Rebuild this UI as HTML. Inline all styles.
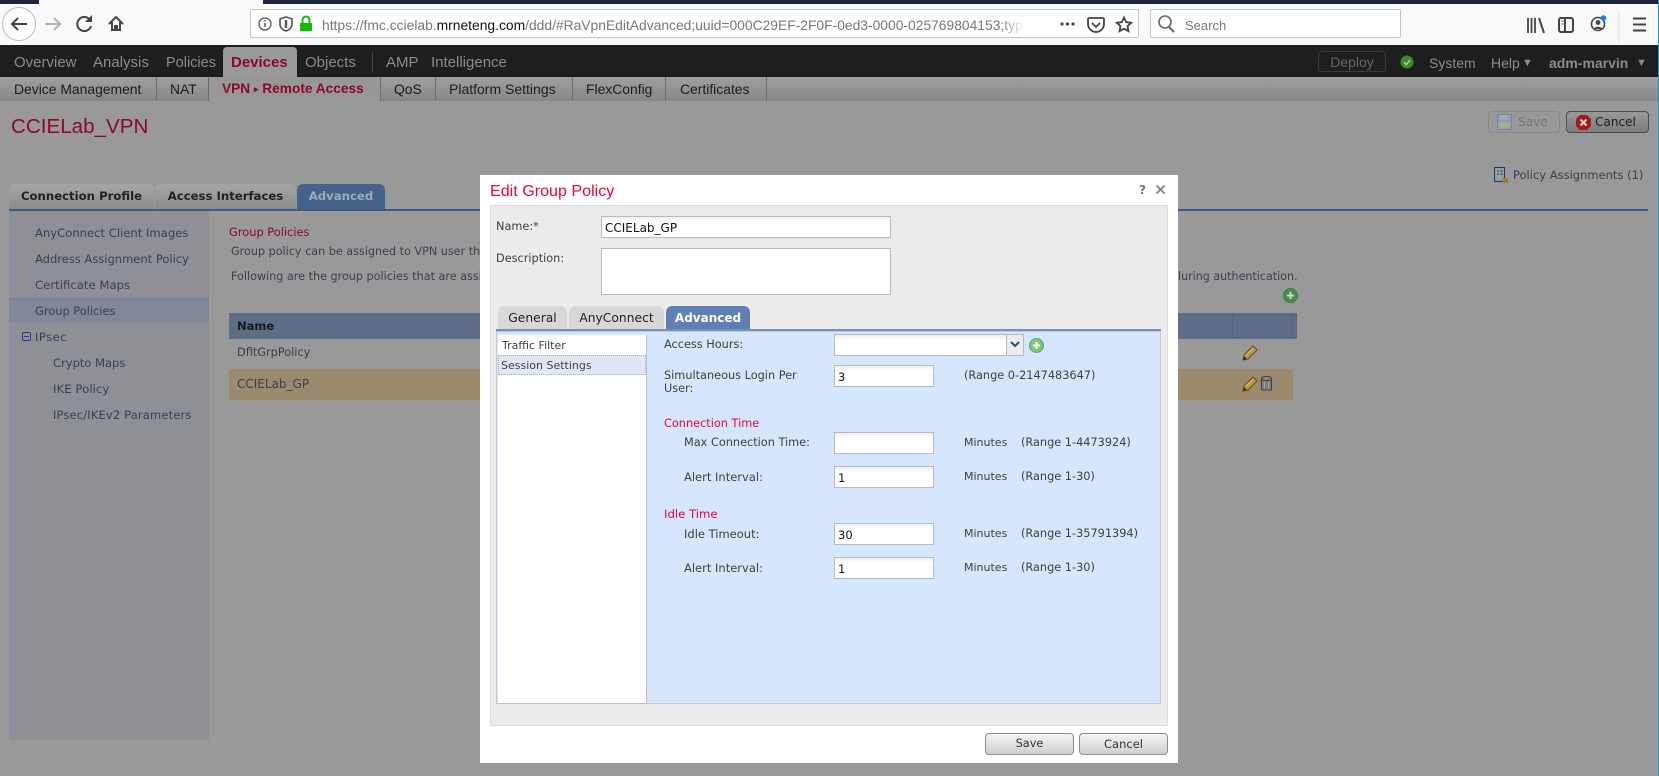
<!DOCTYPE html>
<html><head><meta charset="utf-8"><title>Edit Group Policy</title>
<style>
html,body{margin:0;padding:0}
body{width:1659px;height:776px;overflow:hidden;background:#999;position:relative;font-family:"DejaVu Sans","Liberation Sans",sans-serif;font-size:11.300px;color:#333}
.a{position:absolute}
.t{position:absolute;white-space:nowrap;line-height:16px;height:16px;margin-top:1px}
.n{font-family:"Liberation Sans",sans-serif;font-size:15px;color:#8b8b8b}
.s{font-family:"Liberation Sans",sans-serif;font-size:13.900px;color:#1c1c1c;margin-top:0}
.v{width:1px;background:#6f6f6f;top:77px;height:24px}
.l{color:#3f3f3f}
.d{color:#3a4050;font-size:11.500px}
.m{margin-top:0}
.r{color:#e0083c}
.i{position:absolute;box-sizing:border-box;background:linear-gradient(#f0f0f0,#fff 5px);border:1px solid #b3b8cc;color:#111;padding-left:3px;line-height:23px;height:22px;width:100px;left:834px;font-size:11.500px}
.tab{position:absolute;box-sizing:border-box;border-radius:6px 6px 0 0;text-align:center;font-weight:bold}
.b{position:absolute;box-sizing:border-box;border:1px solid #8d8d8d;border-radius:4px;background:linear-gradient(#f5f5f5,#cfcfcf);text-align:center;line-height:20px;color:#333}
</style></head><body>

<!-- browser chrome -->
<div class="a" style="left:0;top:0;width:1659px;height:45px;background:#f9f9fa"></div>
<div class="a" style="left:0;top:0;width:39px;height:4px;background:#1c2340"></div>
<div class="a" style="left:263px;top:0;width:1396px;height:4px;background:#1c2340"></div>
<svg class="a" style="left:0;top:0" width="240" height="45" fill="none">
<circle cx="19" cy="24" r="16.500" fill="#fff" stroke="#bbb"/>
<path d="M27 24H12M18 18l-6 6 6 6" stroke="#444" stroke-width="2"/>
<path d="M45 24H59M54 18l6 6-6 6" stroke="#b0b0b0" stroke-width="2"/>
<path d="M90 20a7 7 0 1 0 1 6" stroke="#444" stroke-width="2"/><path d="M92 15v7h-7z" fill="#444"/>
<path d="M109 24l7-7 7 7M112 22v8h8v-8M115 30v-4h2v4" stroke="#444" stroke-width="2"/>
</svg>
<div class="a" style="left:250px;top:9px;width:889px;height:29px;box-sizing:border-box;background:#fff;border:1px solid #c4c4c4;border-radius:2px"></div>
<svg class="a" style="left:255px;top:12px" width="60" height="24" fill="none">
<circle cx="10" cy="12" r="6" stroke="#555" stroke-width="1.300"/><path d="M10 11v4M10 8v1.500" stroke="#555" stroke-width="1.500"/>
<path d="M25 7l6-2 6 2v5c0 4-3 6-6 7-3-1-6-3-6-7z" stroke="#555" stroke-width="1.600"/><path d="M31 8v8" stroke="#555" stroke-width="2.400"/>
<rect x="45" y="11" width="12" height="8" fill="#12bc00"/><path d="M47.500 11V8a3.500 3.500 0 0 1 7 0v3" stroke="#12bc00" stroke-width="2"/>
</svg>
<div class="t" style="left:322px;top:16px;width:702px;overflow:hidden;font-family:'Liberation Sans',sans-serif;font-size:13.850px;color:#777">https://fmc.ccielab.<span style="color:#111">mrneteng.com</span>/ddd/#RaVpnEditAdvanced;uuid=000C29EF-2F0F-0ed3-0000-025769804153;typ</div>
<div class="a" style="left:1000px;top:12px;width:24px;height:24px;background:linear-gradient(90deg,rgba(255,255,255,0),#fff)"></div>
<svg class="a" style="left:1055px;top:12px" width="84" height="24" fill="none">
<circle cx="7" cy="12" r="1.600" fill="#444"/><circle cx="12.500" cy="12" r="1.600" fill="#444"/><circle cx="18" cy="12" r="1.600" fill="#444"/>
<path d="M34 6h14a1 1 0 0 1 1 1v5a8 8 0 0 1-16 0V7a1 1 0 0 1 1-1z" stroke="#444" stroke-width="1.800"/><path d="M37 11l4 4 4-4" stroke="#444" stroke-width="1.800"/>
<path d="M69 5.500l2.200 4.700 5 .6-3.700 3.400 1 5-4.500-2.500-4.500 2.500 1-5-3.700-3.400 5-.6z" stroke="#444" stroke-width="1.800"/>
</svg>
<div class="a" style="left:1150px;top:9px;width:251px;height:29px;box-sizing:border-box;background:#fff;border:1px solid #c4c4c4;border-radius:2px"></div>
<svg class="a" style="left:1156px;top:14px" width="22" height="20" fill="none"><circle cx="9" cy="8" r="6" stroke="#666" stroke-width="1.600"/><path d="M13 13l5 5" stroke="#666" stroke-width="2"/></svg>
<div class="t" style="left:1185px;top:17px;font-family:'Liberation Sans',sans-serif;font-size:13px;color:#777">Search</div>
<svg class="a" style="left:1520px;top:8px" width="139" height="36" fill="none">
<path d="M8 10v15M11.500 10v15M15 10v15" stroke="#444" stroke-width="1.800"/><path d="M19 10l5 15" stroke="#444" stroke-width="2"/>
<rect x="39" y="10" width="14" height="14" rx="2" stroke="#444" stroke-width="2"/><path d="M45 10v14" stroke="#444" stroke-width="2"/><path d="M41.500 13h2M41.500 16h2" stroke="#444"/>
<circle cx="78" cy="16" r="6.500" stroke="#444" stroke-width="1.600"/><circle cx="78" cy="14.500" r="2.400" fill="#444"/><path d="M73.500 21a5 4 0 0 1 9 0" fill="#444"/><circle cx="83.500" cy="10" r="2.800" fill="#0a84ff"/>
<path d="M99 3v32" stroke="#ddd"/>
<path d="M113 10.500h13M113 16.500h13M113 22.500h13" stroke="#444" stroke-width="2"/>
</svg>

<!-- top nav -->
<div class="a" style="left:0;top:45px;width:1659px;height:32px;background:#1e1e1e"></div>
<div class="a" style="left:223px;top:47px;width:74px;height:30px;background:#999;border-radius:4px 4px 0 0"></div>
<div class="t n" style="left:14px;top:54px">Overview</div>
<div class="t n" style="left:93px;top:54px">Analysis</div>
<div class="t n" style="left:166px;top:54px;font-size:14.500px">Policies</div>
<div class="t n" style="left:231px;top:54px;color:#8a0a2c;font-weight:bold">Devices</div>
<div class="t n" style="left:305px;top:54px">Objects</div>
<div class="a" style="left:372px;top:52px;width:1px;height:20px;background:#444"></div>
<div class="t n" style="left:386px;top:54px">AMP</div>
<div class="t n" style="left:431px;top:54px">Intelligence</div>
<div class="a" style="left:1318px;top:51px;width:68px;height:21px;box-sizing:border-box;border:1px solid #3a3a3a;border-radius:4px;color:#666;text-align:center;font-family:'Liberation Sans',sans-serif;font-size:14px;line-height:21px">Deploy</div>
<svg class="a" style="left:1400px;top:55px" width="14" height="14"><circle cx="7" cy="7" r="6.500" fill="#3c8a23"/><path d="M4 7l2.300 2.500L10 5" fill="none" stroke="#a9c9a0" stroke-width="1.600"/></svg>
<div class="t n" style="left:1429px;top:54px;font-size:14px">System</div>
<div class="t n" style="left:1491px;top:54px;font-size:14px">Help</div>
<div class="t n" style="left:1522px;top:54px;font-size:11px">▼</div>
<div class="t n" style="left:1549px;top:54px;font-size:14px;font-weight:bold">adm-marvin</div>
<div class="t n" style="left:1636px;top:54px;font-size:11px">▼</div>

<!-- sub nav -->
<div class="a" style="left:0;top:77px;width:1659px;height:24px;background:linear-gradient(#a0a0a0,#868686)"></div>
<div class="a" style="left:208px;top:77px;width:172px;height:24px;background:linear-gradient(#979797,#999)"></div>
<div class="a v" style="left:156px"></div><div class="a v" style="left:208px"></div><div class="a v" style="left:380px"></div><div class="a v" style="left:435px"></div><div class="a v" style="left:572px"></div><div class="a v" style="left:665px"></div><div class="a v" style="left:766px"></div>
<div class="t s" style="left:14px;top:81px">Device Management</div>
<div class="t s" style="left:170px;top:81px">NAT</div>
<div class="t s" style="left:222px;top:81px;color:#8a0a2c;font-weight:bold;font-size:13.700px">VPN <span style="font-size:9px;vertical-align:1px">▸</span> Remote Access</div>
<div class="t s" style="left:394px;top:81px">QoS</div>
<div class="t s" style="left:449px;top:81px;font-size:14px">Platform Settings</div>
<div class="t s" style="left:586px;top:81px">FlexConfig</div>
<div class="t s" style="left:680px;top:81px">Certificates</div>

<!-- page -->
<div class="t" style="left:11px;top:116px;margin-top:0;height:22px;line-height:22px;font-family:'Liberation Sans',sans-serif;font-size:20.600px;color:#8a0a2c">CCIELab_VPN</div>
<div class="b" style="left:1488px;top:111px;width:72px;height:22px;background:#999;border-color:#8a8a8a;color:#777;font-size:12px;padding-left:18px">Save</div>
<svg class="a" style="left:1497px;top:114px" width="16" height="16"><rect x=".5" y=".5" width="14" height="15" fill="#8ea0b8" stroke="#7085a5"/><rect x="3" y="1" width="8" height="5" fill="#a9a9a9"/><rect x="2.500" y="9" width="10" height="5" fill="#a6b08f"/></svg>
<div class="b" style="left:1566px;top:111px;width:83px;height:22px;background:linear-gradient(#999,#7d7d7d);border-color:#4c4c4c;color:#1e1e1e;font-size:12px;padding-left:16px">Cancel</div>
<svg class="a" style="left:1576px;top:115px" width="15" height="15"><path d="M4 0h7l4 4v7l-4 4H4L0 11V4z" fill="#a31a1a"/><path d="M4.500 4.500l6 6M10.500 4.500l-6 6" stroke="#ddd" stroke-width="2"/></svg>
<svg class="a" style="left:1494px;top:167px" width="15" height="17"><rect x=".5" y=".5" width="10" height="14" fill="#8fa0a8" stroke="#26365a"/><path d="M3 4h2M6 4h3M3 7h2M6 7h3" stroke="#1b5a3a"/><rect x="9" y="11" width="5" height="5" fill="#a87a2a"/></svg>
<div class="t d m" style="left:1513px;top:167px">Policy Assignments (1)</div>

<div class="tab" style="left:9px;top:184px;width:145px;height:25px;background:linear-gradient(#a6a6a6,#8b8b8b);color:#222;line-height:25px;font-size:11.700px">Connection Profile</div>
<div class="tab" style="left:155px;top:184px;width:141px;height:25px;background:linear-gradient(#a6a6a6,#8b8b8b);color:#222;line-height:25px;font-size:11.700px">Access Interfaces</div>
<div class="tab" style="left:297px;top:184px;width:88px;height:25px;background:#44628a;color:#a3a9b3;line-height:25px;font-size:11.700px">Advanced</div>
<div class="a" style="left:9px;top:209px;width:1639px;height:2px;background:#3f5a80"></div>

<div class="a" style="left:9px;top:211px;width:200px;height:529px;background:#8f9095"></div>
<div class="a" style="left:9px;top:297px;width:200px;height:26px;background:#82889a"></div>
<div class="t d m" style="left:35px;top:225px;font-size:11.600px">AnyConnect Client Images</div>
<div class="t d m" style="left:35px;top:251px">Address Assignment Policy</div>
<div class="t d m" style="left:35px;top:277px;font-size:11.700px">Certificate Maps</div>
<div class="t d m" style="left:35px;top:303px;font-size:11.400px">Group Policies</div>
<div class="a" style="left:22px;top:332px;width:9px;height:9px;box-sizing:border-box;border:1px solid #1f3a8a;border-radius:2px"></div><div class="a" style="left:24px;top:336px;width:5px;height:1px;background:#1f3a8a"></div>
<div class="t d m" style="left:35px;top:329px;letter-spacing:.5px">IPsec</div>
<div class="t d m" style="left:53px;top:355px">Crypto Maps</div>
<div class="t d m" style="left:53px;top:381px;font-size:11.800px">IKE Policy</div>
<div class="t d m" style="left:53px;top:407px;letter-spacing:.15px">IPsec/IKEv2 Parameters</div>

<div class="t m" style="left:229px;top:224px;color:#8a0a2c;font-size:11.400px">Group Policies</div>
<div class="t d" style="left:231px;top:243px;font-size:11.200px">Group policy can be assigned to VPN user through connection profile or by the RADIUS server</div>
<div class="t d m" style="left:231px;top:269px;font-size:11.200px">Following are the group policies that are assigned to this VPN and can be used during</div>
<div class="t d m" style="left:1178px;top:269px;font-size:11.100px">luring authentication.</div>
<svg class="a" style="left:1283px;top:288px" width="15" height="15"><circle cx="7.500" cy="7.500" r="7" fill="#4c8a50" stroke="#3b7a3f"/><path d="M7.500 4v7M4 7.500h7" stroke="#c8d8c8" stroke-width="2"/></svg>

<div class="a" style="left:229px;top:313px;width:1068px;height:26px;background:#5d6d85"></div>
<div class="a" style="left:1232px;top:313px;width:1px;height:26px;background:#56657c"></div>
<div class="a" style="left:1292px;top:313px;width:1px;height:26px;background:#56657c"></div>
<div class="t m" style="left:237px;top:318px;font-weight:bold;color:#16191f;font-size:11.500px">Name</div>
<div class="t d" style="left:237px;top:344px;font-size:11.300px">DfltGrpPolicy</div>
<div class="a" style="left:229px;top:369px;width:1064px;height:31px;background:#9b8a6d"></div>
<div class="t d" style="left:237px;top:375px;font-size:12px">CCIELab_GP</div>
<svg class="a" style="left:1242px;top:345px" width="16" height="16"><path d="M1 15l1-5L11 1l4 4-9 9z" fill="#b8964a" stroke="#6b4a14"/><path d="M3.500 10.500L11.500 3" stroke="#d8c070"/><path d="M1 15l1-4 3 3z" fill="#3a2a10"/></svg>
<svg class="a" style="left:1242px;top:376px" width="16" height="16"><path d="M1 15l1-5L11 1l4 4-9 9z" fill="#b8964a" stroke="#6b4a14"/><path d="M3.500 10.500L11.500 3" stroke="#d8c070"/><path d="M1 15l1-4 3 3z" fill="#3a2a10"/></svg>
<svg class="a" style="left:1261px;top:376px" width="12" height="15"><rect x=".5" y="3" width="10" height="11" rx="1" fill="#7f7d74" stroke="#3f3f3f"/><ellipse cx="5.500" cy="2.500" rx="5" ry="2" fill="#8a8a8a" stroke="#3f3f3f"/><path d="M3.500 6v6M7.500 6v6" stroke="#a3a196"/></svg>

<div class="a" style="left:1658px;top:0;width:1px;height:776px;background:#2a86e0"></div>

<!-- dialog -->
<div class="a" style="left:480px;top:175px;width:698px;height:588px;background:#fff"></div>
<div class="t" style="left:490px;top:181px;margin-top:0;height:20px;line-height:20px;font-family:'Liberation Sans',sans-serif;font-size:16.100px;color:#e0083c">Edit Group Policy</div>
<div class="t" style="left:1139px;top:181px;font-weight:bold;font-size:12px;color:#777">?</div>
<svg class="a" style="left:1156px;top:185px" width="9" height="9"><path d="M.5.5l8 8M8.500.5l-8 8" stroke="#808080" stroke-width="1.700"/></svg>
<div class="a" style="left:490px;top:205px;width:678px;height:521px;box-sizing:border-box;background:#ececec;border:1px solid #dcdcdc"></div>
<div class="t l" style="left:496px;top:218px">Name:*</div>
<div class="t l" style="left:496px;top:250px">Description:</div>
<div class="i" style="left:601px;top:216px;width:290px;font-size:12px">CCIELab_GP</div>
<div class="a" style="left:601px;top:248px;width:290px;height:47px;box-sizing:border-box;background:#fff;border:1px solid #b3b8cc"></div>

<div class="tab" style="left:498px;top:306px;width:69px;height:23px;background:#d8d8d8;color:#222;font-weight:normal;font-size:12.300px;line-height:24px">General</div>
<div class="tab" style="left:569px;top:306px;width:95px;height:23px;background:#d8d8d8;color:#222;font-weight:normal;font-size:12.300px;line-height:24px">AnyConnect</div>
<div class="tab" style="left:666px;top:306px;width:84px;height:23px;background:#5f80b3;color:#fff;font-size:12px;line-height:24px">Advanced</div>
<div class="a" style="left:496px;top:329px;width:665px;height:2px;background:#6f93c4"></div>
<div class="a" style="left:496px;top:331px;width:665px;height:373px;box-sizing:border-box;background:#d6e6fc;border:1px solid #c8c8c8"></div>
<div class="a" style="left:498px;top:335px;width:149px;height:369px;box-sizing:border-box;background:#fff;border-right:1px solid #c0c0c0;border-bottom:1px solid #c0c0c0"></div>
<div class="a" style="left:498px;top:355px;width:148px;height:20px;box-sizing:border-box;background:#dfe8f5;border:1px dotted #9ab3d8"></div>
<div class="t l" style="left:502px;top:337px;font-size:11px">Traffic Filter</div>
<div class="t l" style="left:501px;top:357px;font-size:11px">Session Settings</div>

<div class="t l" style="left:664px;top:336px">Access Hours:</div>
<div class="i" style="top:334px;width:173px;left:834px"></div>
<div class="a" style="left:1006px;top:334px;width:18px;height:22px;box-sizing:border-box;background:#ececec;border:1px solid #b3b8cc"></div>
<svg class="a" style="left:1010px;top:341px" width="10" height="7"><path d="M1 1l4 4 4-4" fill="none" stroke="#2a4a80" stroke-width="2"/></svg>
<svg class="a" style="left:1029px;top:338px" width="15" height="15"><circle cx="7.500" cy="7.500" r="7" fill="#7cc67e" stroke="#5aa85c"/><path d="M7.500 4v7M4 7.500h7" stroke="#fff" stroke-width="2"/></svg>

<div class="t l" style="left:664px;top:367px">Simultaneous Login Per</div>
<div class="t l" style="left:664px;top:380px">User:</div>
<div class="i" style="top:365px">3</div>
<div class="t l" style="left:964px;top:367px">(Range 0-2147483647)</div>

<div class="t r" style="left:664px;top:415px">Connection Time</div>
<div class="t l" style="left:684px;top:434px">Max Connection Time:</div>
<div class="i" style="top:432px"></div>
<div class="t l" style="left:964px;top:434px;font-size:11px">Minutes</div><div class="t l" style="left:1021px;top:434px">(Range 1-4473924)</div>
<div class="t l" style="left:684px;top:468px;font-size:11.500px">Alert Interval:</div>
<div class="i" style="top:466px">1</div>
<div class="t l" style="left:964px;top:468px;font-size:11px">Minutes</div><div class="t l" style="left:1021px;top:468px">(Range 1-30)</div>

<div class="t r" style="left:664px;top:505px;font-size:11.700px">Idle Time</div>
<div class="t l" style="left:684px;top:525px;font-size:11.500px">Idle Timeout:</div>
<div class="i" style="top:523px">30</div>
<div class="t l" style="left:964px;top:525px;font-size:11px">Minutes</div><div class="t l" style="left:1021px;top:525px">(Range 1-35791394)</div>
<div class="t l" style="left:684px;top:559px;font-size:11.500px">Alert Interval:</div>
<div class="i" style="top:557px">1</div>
<div class="t l" style="left:964px;top:559px;font-size:11px">Minutes</div><div class="t l" style="left:1021px;top:559px">(Range 1-30)</div>

<div class="b" style="left:985px;top:733px;width:89px;height:22px;font-size:11.300px">Save</div>
<div class="b" style="left:1079px;top:733px;width:89px;height:22px;font-size:11.500px">Cancel</div>
</body></html>
